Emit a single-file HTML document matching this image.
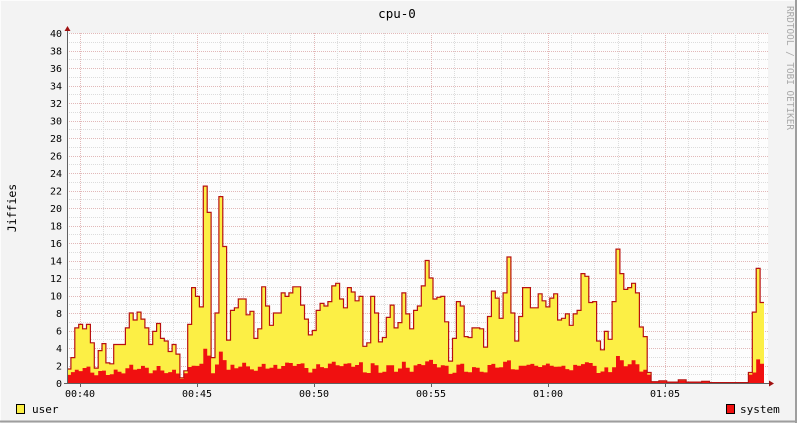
<!DOCTYPE html>
<html><head><meta charset="utf-8"><style>
html,body{margin:0;padding:0;background:#f3f3f3;}
svg{display:block;}
text{font-family:"DejaVu Sans Mono","Liberation Mono",monospace;}
</style></head><body>
<svg id="g" width="797" height="423" xmlns="http://www.w3.org/2000/svg">
<rect x="0" y="0" width="797" height="423" fill="#f3f3f3"/>
<line x1="0" y1="0.5" x2="797" y2="0.5" stroke="#fcfcfc"/>
<line x1="0.5" y1="0" x2="0.5" y2="423" stroke="#fcfcfc"/>
<line x1="0" y1="421.5" x2="797" y2="421.5" stroke="#9e9e9e" stroke-width="2"/>
<line x1="796" y1="0" x2="796" y2="423" stroke="#9e9e9e" stroke-width="2"/>
<rect x="67" y="33" width="701" height="350" fill="#fdfdfd"/>
<g id="grid"></g>
<g id="data"></g>
<line x1="67.5" y1="30" x2="67.5" y2="384" stroke="#606060"/>
<line x1="64" y1="383.5" x2="770" y2="383.5" stroke="#606060"/>
<polygon points="64.5,31 70.5,31 67.5,26" fill="#a01010"/>
<polygon points="769,380.5 769,386.5 774,383.5" fill="#a01010"/>
<text x="397" y="18" font-size="12.5" text-anchor="middle" fill="#000">cpu-0</text>
<text transform="translate(16,208) rotate(-90)" font-size="11.5" text-anchor="middle" fill="#000">Jiffies</text>
<text transform="translate(787,68) rotate(90)" font-size="10" textLength="124" lengthAdjust="spacingAndGlyphs" text-anchor="middle" fill="#a8a8a8">RRDTOOL / TOBI OETIKER</text>
<g id="labels" font-size="10" fill="#000"></g>
<rect x="16.5" y="404.5" width="8" height="9" fill="#fcef45" stroke="#000"/>
<text x="32" y="413" font-size="11" fill="#000">user</text>
<rect x="726.5" y="404.5" width="8" height="9" fill="#f01010" stroke="#000"/>
<text x="740" y="413" font-size="11" fill="#000">system</text>
</svg>
<script>
var NS="http://www.w3.org/2000/svg";
function el(p,t,a,txt){var e=document.createElementNS(NS,t);for(var k in a)e.setAttribute(k,a[k]);if(txt!==undefined)e.textContent=txt;p.appendChild(e);return e;}
var grid=document.getElementById('grid'),lab=document.getElementById('labels'),data=document.getElementById('data');
function Y(v){return 383-v*8.75;}
for(var v=0;v<=40;v++){var y=Math.round(Y(v))+0.5;
 el(grid,'line',{x1:67,y1:y,x2:768,y2:y,stroke:(v%2==0?'#e2b8b8':'#dcdcdc'),'stroke-dasharray':'1,1'});
 if(v%2==0)el(lab,'text',{x:62,y:Y(v)+4,'text-anchor':'end'},String(v));}
for(var m=0;m<30;m++){var x=Math.round(79.5+m*23.4)+0.5;if(x>768)break;
 el(grid,'line',{x1:x,y1:33,x2:x,y2:383,stroke:(m%5==0?'#e2b8b8':'#dcdcdc'),'stroke-dasharray':'1,1'});}
var tl=['00:40','00:45','00:50','00:55','01:00','01:05'];
for(var i=0;i<6;i++){el(lab,'text',{x:80+i*117,y:397,'text-anchor':'middle'},tl[i]);
 el(grid,'line',{x1:80.5+i*117,y1:383,x2:80.5+i*117,y2:387,stroke:'#606060'});}
var T=[1.6,2.9,6.3,6.7,6.2,6.7,4.6,1.7,3.7,4.5,2.3,2.2,4.4,4.4,4.4,6.3,8.0,7.2,8.1,7.3,6.3,4.4,5.9,6.8,5.1,4.8,3.6,4.4,3.3,0.6,
1.4,6.7,10.9,9.9,8.7,22.5,19.5,2.9,8.0,21.3,15.6,4.9,8.3,8.6,9.6,9.6,7.8,8.2,5.1,6.2,11,8.8,6.6,8,8,10.3,9.9,10.3,11,11,
8.9,7.3,5.5,6.0,8.3,9.1,8.8,9.3,11.1,11.4,9.6,8.6,10.9,10.4,9.4,9.9,4.2,4.6,9.9,8.0,4.7,5.2,7.5,8.9,6.3,6.9,10.3,7.9,6.2,8.3,8.8,11.1,14,12,9.6,9.8,9.9,7,2.5,5.1,9.3,8.8,5.3,5.2,6.3,6.3,6.2,4.1,7.6,10.5,9.7,7.4,10.3,14.4,8,4.8,7.6,10.9,10.9,8.6,
8.6,10.2,9.4,8.7,9.7,10.2,7.2,7.4,7.9,6.6,7.9,8.3,12.5,12.2,9.2,9.3,4.8,3.8,5.9,5.0,9.3,15.3,12.5,10.7,10.9,11.4,10.3,6.4,5.3,1.2,0.15,0.15,0.25,0.25,
0.1,0.1,0.1,0.35,0.35,0.1,0.1,0.1,0.1,0.2,0.2,0.05,0.05,0.05,0.05,0.05,0.05,0.05,0.05,0.05,0.05,1.2,8.1,13.1,9.2];
var n=T.length,step=(764-67)/n;
var S=[];for(var i=0;i<n;i++){var t=T[i];var s=t<1.5?t*0.8:0.7+0.14*t+0.3*Math.sin(i*1.7)*Math.min(1,t/6);S.push(Math.max(0,Math.min(t,s)));}
S[n-3]=1.2;S[n-2]=2.7;S[n-1]=2.2;
function area(A){var d='M67,383';for(var i=0;i<n;i++){var x0=67+i*step,x1=67+(i+1)*step;d+=' L'+x0.toFixed(1)+','+Y(A[i]).toFixed(1)+' L'+x1.toFixed(1)+','+Y(A[i]).toFixed(1);}d+=' L'+(67+n*step).toFixed(1)+',383 Z';return d;}
function line(A){var d='';for(var i=0;i<n;i++){var x0=67+i*step,x1=67+(i+1)*step;d+=(i?' L':'M')+x0.toFixed(1)+','+Y(A[i]).toFixed(1)+' L'+x1.toFixed(1)+','+Y(A[i]).toFixed(1);}return d;}
el(data,'path',{d:area(T),fill:'#fcef45'});
el(data,'path',{d:area(S),fill:'#f01010'});
el(data,'path',{d:line(T),fill:'none',stroke:'#b81010','stroke-width':1.2});
</script>
</body></html>
